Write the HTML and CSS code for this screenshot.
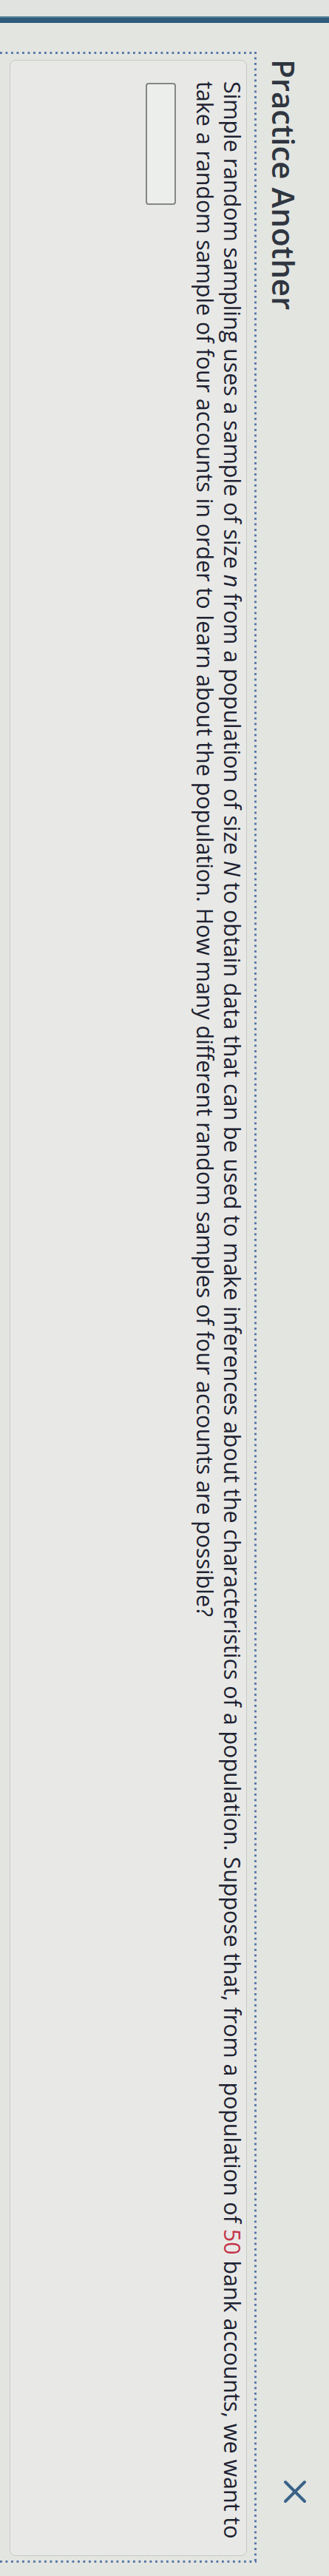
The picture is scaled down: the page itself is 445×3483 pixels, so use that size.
FILE: index.html
```html
<!DOCTYPE html>
<html lang="en">
<head>
<meta charset="utf-8">
<title>Practice Another</title>
<link rel="stylesheet" href="styles.css">
</head>
<body>
<div class="topbar"><div class="rule"></div></div>
<main class="stage">
  <section class="panel">
    <div class="card">
      <p class="prompt">Simple random sampling uses a sample of size <i>n</i> from a population of size <i>N</i> to obtain data that can be used to make inferences about the characteristics of a population. Suppose that, from a population of <span class="num">50</span> bank accounts, we want to take a random sample of four accounts in order to learn about the population. How many different random samples of four accounts are possible?</p>
      <div class="answer"></div>
    </div>
  </section>
  <header class="head">
    <h1 class="title">Practice Another</h1>
    <button class="close" type="button" aria-label="Close">
      <svg viewBox="0 0 36 36" width="36" height="36"><path d="M5 5 L31 31 M31 5 L5 31" fill="none" stroke="#3a6288" stroke-width="4" stroke-linecap="round"/></svg>
    </button>
  </header>
</main>
</body>
</html>
```
FILE: styles.css
```css
html, body {
  margin: 0;
  padding: 0;
}
body {
  width: 445px;
  height: 3483px;
  overflow: hidden;
  background: #e3e5e1;
  font-family: "Open Sans", "Noto Sans", sans-serif;
  color: #1e2232;
}
.topbar {
  height: 22px;
  background: #e0e3df;
  position: relative;
}
.rule {
  position: absolute;
  left: 0;
  right: 0;
  bottom: -9px;
  height: 9px;
  box-sizing: border-box;
  border-top: 2px solid #5b8598;
  background: #2f5b7c;
}
.stage {
  display: flex;
  height: 3461px;
  padding-top: 9px;
  box-sizing: border-box;
}
.panel {
  flex: 0 0 347px;
  margin-top: 39px;
  height: 3395px;
  box-sizing: border-box;
  padding: 11px 13px 9px 13px;
  background:
    linear-gradient(to right, #5877a8 3px, transparent 3px) left top / 7.5px 3px repeat-x,
    linear-gradient(to bottom, #5877a8 3px, transparent 3px) right top / 3px 7.5px repeat-y,
    linear-gradient(to right, #5877a8 3px, transparent 3px) left bottom / 7.5px 3px repeat-x;
  display: flex;
}
.card {
  flex: 1;
  writing-mode: vertical-rl;
  box-sizing: border-box;
  border: 1.5px solid #c8cac6;
  border-radius: 8px;
  background: #e8e9e6;
  padding-inline-start: 28px;
  padding-inline-end: 10px;
  padding-block-start: 0;
}
.prompt {
  margin: 0;
  font-size: 30.4px;
  line-height: 37.5px;
}
.prompt i {
  font-style: italic;
}
.num {
  color: #c4334a;
}
.answer {
  margin-block-start: 20px;
  margin-inline-start: 2px;
  inline-size: 165px;
  block-size: 41px;
  box-sizing: border-box;
  border: 2px solid #858783;
  border-radius: 4px;
  background: #eceeeb;
}
.head {
  flex: 1;
  writing-mode: vertical-rl;
  display: flex;
  justify-content: space-between;
  align-items: flex-start;
  padding-inline-start: 49px;
  padding-inline-end: 96px;
}
.title {
  margin: 0;
  margin-block-start: 37px;
  font-size: 42px;
  line-height: 48px;
  font-weight: 600;
  color: #2f3640;
}
.close {
  margin: 0;
  margin-block-start: 28px;
  padding: 0;
  border: 0;
  background: none;
  inline-size: 36px;
  block-size: 36px;
  display: flex;
}
.close svg {
  display: block;
}
```
